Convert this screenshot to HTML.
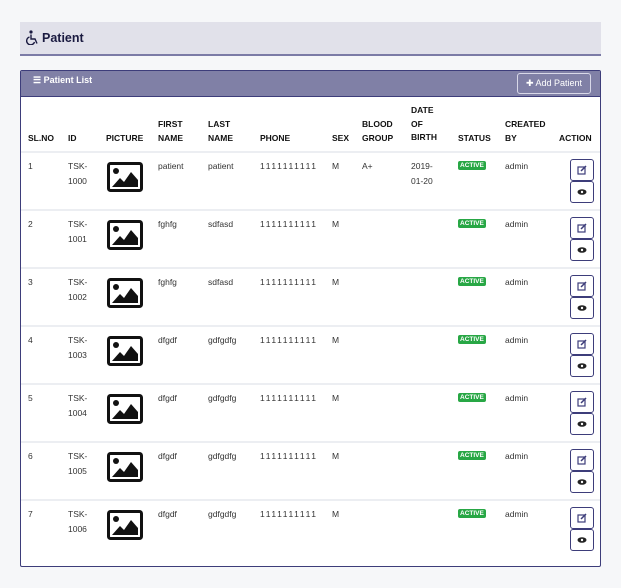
<!DOCTYPE html>
<html><head><style>
body{margin:0;width:621px;height:588px;background:#f6f7f9;font-family:"Liberation Sans",sans-serif;position:relative;overflow:hidden}
.top{position:absolute;left:20px;top:22px;width:581px;height:32px;background:#e1e1ea;border-bottom:2px solid #7b7ba6}
.top span{position:absolute;left:22px;top:9px;font-size:12.5px;font-weight:bold;color:#1a1a40}
.card{position:absolute;left:20px;top:70px;width:579px;height:495px;border:1px solid #3d3d7a;border-radius:2px;background:#fff}
.ch{height:25px;background:#8080a6;border-bottom:1px solid #3d3d7a;position:relative;color:#fff}
.ch .t{position:absolute;left:12px;top:4px;font-size:9px;font-weight:bold}
.ch .b{position:absolute;left:496px;top:2px;width:72px;height:19px;border:1px solid #d8d8e8;border-radius:3px;font-size:9px;line-height:19px;text-align:center}
.hd{position:absolute;font-size:8.5px;font-weight:bold;color:#111;line-height:13.5px}
.c{position:absolute;font-size:8.5px;color:#333;line-height:14px}
.row{position:absolute;left:0;width:579px;height:58px;border-top:2px solid #eceef2}
.act{position:absolute;font-size:6.5px;font-weight:bold;color:#fff;background:#28a745;border-radius:2px;padding:0 2px;line-height:9px}
.btn{position:absolute;left:549px;width:22px;height:20px;border:1px solid #3d3d7a;border-radius:3px;background:#fff}
</style></head><body>
<div class="top"><svg style="position:absolute;left:6px;top:8px" width="13" height="15" viewBox="0 0 13 15"><circle cx="5" cy="2" r="1.6" fill="#1a1a40"/><path d="M5 4.5 V9 H9 L11 13.5 M3.5 7 A4 4 0 1 0 8.5 12" fill="none" stroke="#1a1a40" stroke-width="1.4"/></svg><span>Patient</span></div>
<div class="card">
<div class="ch"><div class="t">☰ Patient List</div><div class="b">✚ Add Patient</div></div>
<div class="hd" style="left:7px;top:61px">SL.NO</div>
<div class="hd" style="left:47px;top:61px">ID</div>
<div class="hd" style="left:85px;top:61px">PICTURE</div>
<div class="hd" style="left:137px;top:47px">FIRST<br>NAME</div>
<div class="hd" style="left:187px;top:47px">LAST<br>NAME</div>
<div class="hd" style="left:239px;top:61px">PHONE</div>
<div class="hd" style="left:311px;top:61px">SEX</div>
<div class="hd" style="left:341px;top:47px">BLOOD<br>GROUP</div>
<div class="hd" style="left:390px;top:33px">DATE<br>OF<br>BIRTH</div>
<div class="hd" style="left:437px;top:61px">STATUS</div>
<div class="hd" style="left:484px;top:47px">CREATED<br>BY</div>
<div class="hd" style="left:538px;top:61px">ACTION</div>
<div id="rows"></div>
</div>
<script>
var d=[["1","1000","patient","patient","A+","2019-<br>01-20"],["2","1001","fghfg","sdfasd","",""],["3","1002","fghfg","sdfasd","",""],["4","1003","dfgdf","gdfgdfg","",""],["5","1004","dfgdf","gdfgdfg","",""],["6","1005","dfgdf","gdfgdfg","",""],["7","1006","dfgdf","gdfgdfg","",""]];
var h="";
d.forEach(function(r,i){var y=80+i*58;
h+='<div class="row" style="top:'+y+'px"></div>';
var t=y+8;
h+='<div class="c" style="left:7px;top:'+t+'px">'+r[0]+'</div><div class="c" style="left:47px;top:'+t+'px;line-height:14.5px">TSK-<br>'+r[1]+'</div>';
h+='<svg style="position:absolute;left:86px;top:'+(y+11)+'px" width="36" height="30" viewBox="0 0 36 30"><rect x="1.5" y="1.5" width="33" height="27" rx="2" fill="#fff" stroke="#111" stroke-width="3"/><circle cx="9" cy="9" r="3" fill="#111"/><path d="M5 25 L13 16 L17 20 L24 10 L31 18 L31 25Z" fill="#111"/></svg>';
h+='<div class="c" style="left:137px;top:'+t+'px">'+r[2]+'</div><div class="c" style="left:187px;top:'+t+'px">'+r[3]+'</div><div class="c" style="left:239px;top:'+t+'px;letter-spacing:1.6px">1111111111</div><div class="c" style="left:311px;top:'+t+'px">M</div><div class="c" style="left:341px;top:'+t+'px">'+r[4]+'</div><div class="c" style="left:390px;top:'+t+'px;line-height:15px">'+r[5]+'</div>';
h+='<div class="act" style="left:437px;top:'+(t+2)+'px">ACTIVE</div><div class="c" style="left:484px;top:'+t+'px">admin</div>';
h+='<div class="btn" style="top:'+(y+8)+'px"><svg width="22" height="20"><rect x="7" y="7" width="7" height="7" fill="none" stroke="#3d3d7a" stroke-width="1.2"/><path d="M10 11 L15 6" stroke="#3d3d7a" stroke-width="1.5"/></svg></div>';
h+='<div class="btn" style="top:'+(y+30)+'px"><svg width="22" height="20"><ellipse cx="11" cy="10" rx="4.5" ry="2.8" fill="#222"/><circle cx="11" cy="10" r="1.2" fill="#fff"/></svg></div>';
});
document.getElementById("rows").outerHTML=h;
</script>
</body></html>
